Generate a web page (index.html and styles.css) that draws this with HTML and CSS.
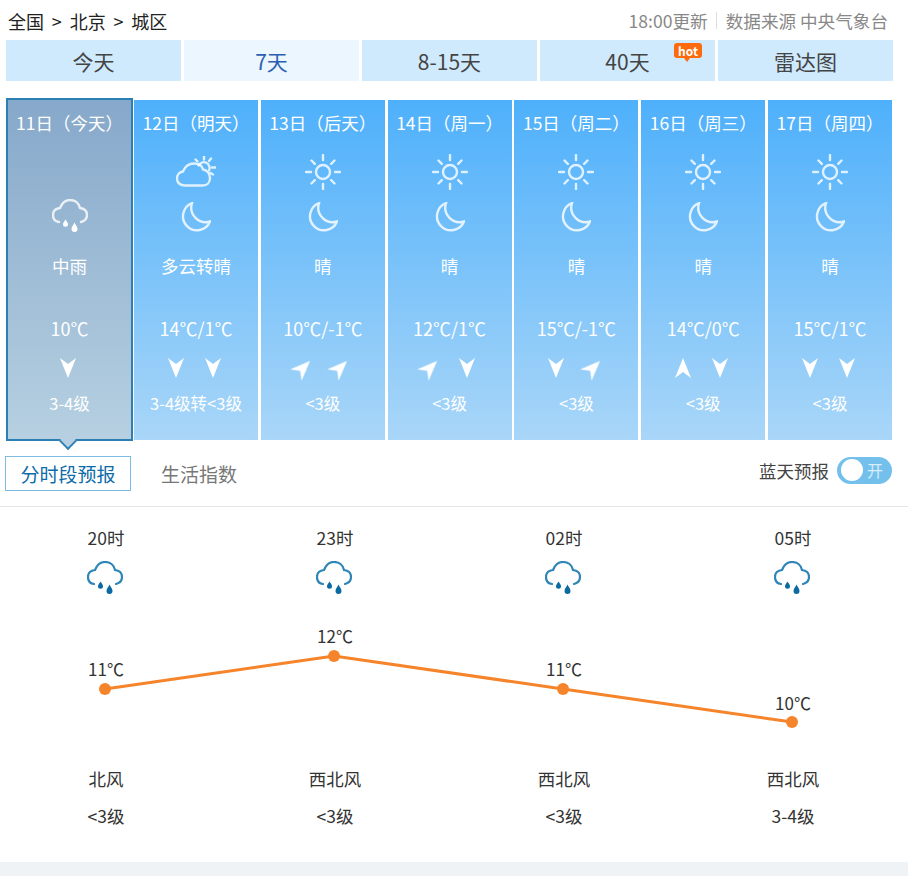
FILE: index.html
```html
<!DOCTYPE html>
<html lang="zh-CN">
<head>
    <meta charset="UTF-8" />
    <title>北京天气预报</title>
    <link rel="stylesheet" href="styles.css">
</head>
<body>
    <svg class="icon-defs" width="0" height="0">
        <symbol id="sun" viewBox="0 0 36 36">
            <circle cx="18" cy="18" r="7" />
            <path d="M18 1v5M18 30v5M1 18h5M30 18h5M6.500 6.500l3.300 3.300M26.200 26.200l3.300 3.300M6.500 29.500l3.300-3.300M26.200 9.800l3.300-3.300" />
        </symbol>
        <symbol id="moon" viewBox="0 0 30 30">
            <path d="M11 1.200A14 14 0 1 0 29 19.500A14.500 14.500 0 0 1 11 1.200Z" />
        </symbol>
        <symbol id="cloudsun" viewBox="0 0 40 31">
            <path d="M9 29.500C4 29.500 1 26.500 1 22.500C1 18.500 4 16 7 15.500C9 10.500 13 7.500 18 7.500C22 7.500 26 9.500 27 13.500C31 14 34 17.500 34 22C34 26.500 31 29.500 27 29.500Z" />
            <path d="M22.500 9.500A5.800 5.800 0 0 1 33 14.500M28 0v3.500M35 2.500l-2 2.500M36 11.500h3.500M34.500 17l2.500 1.500M19.500 3.500l2 2" />
        </symbol>
        <symbol id="rain" viewBox="0 0 36 35">
            <path d="M7 23C3 22.500 1 19.500 1 16C1 12 4 9.500 8 9C10 4 14 1 18 1C23 1 27 4 28 9C32 9.500 35 12 35 16C35 19.500 33 22 29 23" />
            <path class="rain-drop" d="M13.500 20.500C14.500 22.500 16 23.500 16 25.300A2.500 2.500 0 0 1 11 25.300C11 23.500 12.500 22.500 13.500 20.500Z" />
            <path class="rain-drop" d="M22.500 23.500C23.500 26 25.500 27.500 25.500 30A3 3 0 0 1 19.500 30C19.500 27.500 21.500 26 22.500 23.500Z" />
        </symbol>
        <symbol id="arrow" viewBox="0 0 16 20">
            <path d="M0 0L8 6L16 0L8 20Z" />
        </symbol>
    </svg>

    <div class="page">
        <div class="top-bar">
            <div class="crumbs">全国 &gt; 北京 &gt; 城区</div>
            <div class="source">18:00更新<span class="sep"></span>数据来源 中央气象台</div>
        </div>

        <div class="tabs">
            <a class="tab">今天</a>
            <a class="tab active">7天</a>
            <a class="tab">8-15天</a>
            <a class="tab">40天<span class="hot">hot</span></a>
            <a class="tab">雷达图</a>
        </div>

        <div class="days">
            <div class="day today">
                <div class="date">11日（今天）</div>
                <div class="icon-row"></div>
                <div class="icon-row"><svg class="rain-icon"><use href="#rain" /></svg></div>
                <div class="weather">中雨</div>
                <div class="temp">10℃</div>
                <div class="wind"><svg class="arrow"><use href="#arrow" /></svg></div>
                <div class="level">3-4级</div>
            </div>
            <div class="day">
                <div class="date">12日（明天）</div>
                <div class="icon-row"><svg class="cloudsun-icon"><use href="#cloudsun" /></svg></div>
                <div class="icon-row"><svg class="moon-icon"><use href="#moon" /></svg></div>
                <div class="weather">多云转晴</div>
                <div class="temp">14℃/1℃</div>
                <div class="wind"><svg class="arrow"><use href="#arrow" /></svg><svg class="arrow"><use href="#arrow" /></svg></div>
                <div class="level">3-4级转&lt;3级</div>
            </div>
            <div class="day">
                <div class="date">13日（后天）</div>
                <div class="icon-row"><svg class="sun-icon"><use href="#sun" /></svg></div>
                <div class="icon-row"><svg class="moon-icon"><use href="#moon" /></svg></div>
                <div class="weather">晴</div>
                <div class="temp">10℃/-1℃</div>
                <div class="wind"><svg class="arrow ne"><use href="#arrow" /></svg><svg class="arrow ne"><use href="#arrow" /></svg></div>
                <div class="level">&lt;3级</div>
            </div>
            <div class="day">
                <div class="date">14日（周一）</div>
                <div class="icon-row"><svg class="sun-icon"><use href="#sun" /></svg></div>
                <div class="icon-row"><svg class="moon-icon"><use href="#moon" /></svg></div>
                <div class="weather">晴</div>
                <div class="temp">12℃/1℃</div>
                <div class="wind"><svg class="arrow ne"><use href="#arrow" /></svg><svg class="arrow"><use href="#arrow" /></svg></div>
                <div class="level">&lt;3级</div>
            </div>
            <div class="day">
                <div class="date">15日（周二）</div>
                <div class="icon-row"><svg class="sun-icon"><use href="#sun" /></svg></div>
                <div class="icon-row"><svg class="moon-icon"><use href="#moon" /></svg></div>
                <div class="weather">晴</div>
                <div class="temp">15℃/-1℃</div>
                <div class="wind"><svg class="arrow"><use href="#arrow" /></svg><svg class="arrow ne"><use href="#arrow" /></svg></div>
                <div class="level">&lt;3级</div>
            </div>
            <div class="day">
                <div class="date">16日（周三）</div>
                <div class="icon-row"><svg class="sun-icon"><use href="#sun" /></svg></div>
                <div class="icon-row"><svg class="moon-icon"><use href="#moon" /></svg></div>
                <div class="weather">晴</div>
                <div class="temp">14℃/0℃</div>
                <div class="wind"><svg class="arrow up"><use href="#arrow" /></svg><svg class="arrow"><use href="#arrow" /></svg></div>
                <div class="level">&lt;3级</div>
            </div>
            <div class="day">
                <div class="date">17日（周四）</div>
                <div class="icon-row"><svg class="sun-icon"><use href="#sun" /></svg></div>
                <div class="icon-row"><svg class="moon-icon"><use href="#moon" /></svg></div>
                <div class="weather">晴</div>
                <div class="temp">15℃/1℃</div>
                <div class="wind"><svg class="arrow"><use href="#arrow" /></svg><svg class="arrow"><use href="#arrow" /></svg></div>
                <div class="level">&lt;3级</div>
            </div>
        </div>

        <div class="sub-bar">
            <a class="sub-tab active">分时段预报</a>
            <a class="sub-tab">生活指数</a>
            <div class="blue-sky">
                <span>蓝天预报</span>
                <div class="toggle"><span class="knob"></span><span class="toggle-text">开</span></div>
            </div>
        </div>
    </div>

    <div class="hours">
        <div class="hour"><div class="hour-time">20时</div><svg class="hour-icon"><use href="#rain" /></svg></div>
        <div class="hour"><div class="hour-time">23时</div><svg class="hour-icon"><use href="#rain" /></svg></div>
        <div class="hour"><div class="hour-time">02时</div><svg class="hour-icon"><use href="#rain" /></svg></div>
        <div class="hour"><div class="hour-time">05时</div><svg class="hour-icon"><use href="#rain" /></svg></div>
    </div>

    <svg class="chart" width="908" height="130" viewBox="0 0 908 130">
        <polyline class="chart-line" points="105,69 334,36 563,69 792,102" />
        <circle class="chart-dot" cx="105" cy="69" r="6" />
        <circle class="chart-dot" cx="334" cy="36" r="6" />
        <circle class="chart-dot" cx="563" cy="69" r="6" />
        <circle class="chart-dot" cx="792" cy="102" r="6" />
        <text class="chart-label" x="106" y="56">11℃</text>
        <text class="chart-label" x="335" y="23">12℃</text>
        <text class="chart-label" x="564" y="56">11℃</text>
        <text class="chart-label" x="793" y="90">10℃</text>
    </svg>

    <div class="hours hours-wind">
        <div class="hour"><div class="hour-wind">北风</div><div class="hour-level">&lt;3级</div></div>
        <div class="hour"><div class="hour-wind">西北风</div><div class="hour-level">&lt;3级</div></div>
        <div class="hour"><div class="hour-wind">西北风</div><div class="hour-level">&lt;3级</div></div>
        <div class="hour"><div class="hour-wind">西北风</div><div class="hour-level">3-4级</div></div>
    </div>

    <div class="footer-band"></div>
</body>
</html>
```

FILE: styles.css
```css
html, body {
    margin: 0;
    height: 876px;
    overflow: hidden;
}

body {
    background: #fff;
    font-family: "Noto Sans CJK SC", "Liberation Sans", sans-serif;
    color: #333;
    display: flex;
    flex-direction: column;
}

.icon-defs {
    position: absolute;
}

.page {
    padding: 0 15px 0 6px;
    border-bottom: 1px solid #e6e6e6;
    height: 507px;
    box-sizing: border-box;
}

.top-bar {
    display: flex;
    justify-content: space-between;
    height: 40px;
    padding: 0 5px 0 2px;
    line-height: 43px;
}

.crumbs {
    font-size: 18px;
    color: #222;
    word-spacing: 3.800px;
}

.source {
    font-size: 17.6px;
    color: #888;
    display: flex;
    align-items: center;
}

.sep {
    width: 1px;
    height: 17px;
    background: #ddd;
    margin: 0 9px 0 8px;
}

.tabs {
    display: flex;
    gap: 3px;
}

.tab {
    flex: 1;
    position: relative;
    height: 41px;
    line-height: 42px;
    text-align: center;
    font-size: 21px;
    color: #444;
    background: #cfe9fd;
}

.tab.active {
    background: #ebf6fe;
    color: #2c5fb3;
}

.hot {
    position: absolute;
    top: 3px;
    right: 13px;
    width: 28px;
    height: 15px;
    border-radius: 3px;
    background: #ff6a0d;
    color: #fff;
    font-size: 12px;
    font-weight: bold;
    line-height: 15px;
}

.hot::after {
    content: "";
    position: absolute;
    left: 10px;
    top: 15px;
    border: 3px solid transparent;
    border-top: 4px solid #ff6a0d;
    border-bottom: 0;
}

.days {
    display: flex;
    gap: 2.8px;
    margin: 17px 1px 0 0;
    height: 343px;
}

.day {
    flex: 1;
    margin: 2px 0 1px;
    background: linear-gradient(#4eb0fb, #a9d6f8);
    color: #fff;
    text-align: center;
    font-size: 17.5px;
}

.day.today {
    flex: 0 0 127px;
    box-sizing: border-box;
    margin: 0 -1.800px 0 0;
    position: relative;
    border: 2px solid #2a80b3;
    background: linear-gradient(#86a8ca, #b6d0e1);
}

.day.today::after {
    content: "";
    position: absolute;
    left: 53px;
    bottom: -9px;
    width: 12px;
    height: 12px;
    background: #b6d0e1;
    border: solid #2a80b3;
    border-width: 0 2px 2px 0;
    transform: rotate(45deg) scale(0.9);
}

.date {
    height: 49px;
    line-height: 46px;
}

.icon-row {
    height: 45px;
    display: flex;
    justify-content: center;
    align-items: center;
}

.icon-row svg {
    fill: none;
    stroke: #fff;
    stroke-width: 2.4;
    stroke-linecap: round;
    stroke-opacity: 0.8;
    --drop: #fff;
}

.sun-icon {
    width: 36px;
    height: 36px;
}

.moon-icon {
    width: 30px;
    height: 30px;
}

.cloudsun-icon {
    width: 40px;
    height: 31px;
}

.rain-icon {
    width: 36px;
    height: 35px;
}

.rain-drop {
    fill: var(--drop);
    stroke: none;
}

.weather {
    margin-top: 10px;
    height: 34px;
    line-height: 34px;
}

.temp {
    margin-top: 28px;
    height: 34px;
    line-height: 34px;
    font-size: 18px;
}

.wind {
    margin-top: 10px;
    height: 26px;
    display: flex;
    justify-content: center;
    align-items: center;
    gap: 21px;
    padding-right: 3px;
}

.arrow {
    width: 16px;
    height: 20px;
    fill: #fff;
    filter: blur(0.5px);
}

.arrow.ne {
    transform: rotate(-135deg);
}

.arrow.up {
    transform: rotate(180deg);
}

.level {
    margin-top: 8px;
    height: 28px;
    line-height: 28px;
    font-size: 16.500px;
}

.sub-bar {
    display: flex;
    align-items: flex-start;
    margin: 15px 0 0 -1px;
}

.sub-tab {
    width: 124px;
    height: 33px;
    line-height: 33px;
    margin-right: 5px;
    text-align: center;
    font-size: 19px;
    color: #777;
    border: 1px solid transparent;
}

.sub-tab.active {
    color: #0d6ba8;
    border-color: #7dbbe0;
}

.blue-sky {
    margin-left: auto;
    margin-right: 1px;
    display: flex;
    align-items: center;
    gap: 8px;
    font-size: 17.500px;
    color: #444;
    height: 28px;
}

.toggle {
    width: 55px;
    height: 27px;
    border-radius: 14px;
    background: #74c0ec;
    display: flex;
    align-items: center;
    box-sizing: border-box;
    padding: 0 9px 0 4px;
    justify-content: space-between;
}

.knob {
    width: 22px;
    height: 22px;
    border-radius: 50%;
    background: #fff;
}

.toggle-text {
    color: #d8eefb;
    font-size: 16px;
    line-height: 27px;
}

.hours {
    display: flex;
    gap: 129px;
    padding-left: 56px;
}

.hour {
    width: 100px;
    text-align: center;
    font-size: 17.500px;
    color: #333;
}

.hour-time {
    margin-top: 17px;
    height: 28px;
    line-height: 28px;
}

.hour-icon {
    display: block;
    margin: 9px 0 0 31px;
    width: 36px;
    height: 35px;
    fill: none;
    stroke: #2f85b5;
    stroke-width: 2.2;
    stroke-linecap: round;
    --drop: #0a6aa1;
}

.chart {
    display: block;
    margin-top: 24px;
}

.chart-line {
    fill: none;
    stroke: #f5842a;
    stroke-width: 3;
}

.chart-dot {
    fill: #f5842a;
}

.chart-label {
    font-size: 17px;
    fill: #333;
    text-anchor: middle;
}

.hours-wind {
    margin-top: 15px;
}

.hour-wind,
.hour-level {
    height: 28px;
    line-height: 28px;
}

.hour-level {
    margin-top: 9px;
}

.footer-band {
    margin-top: auto;
    height: 14px;
    background: #eff3f6;
}
```
